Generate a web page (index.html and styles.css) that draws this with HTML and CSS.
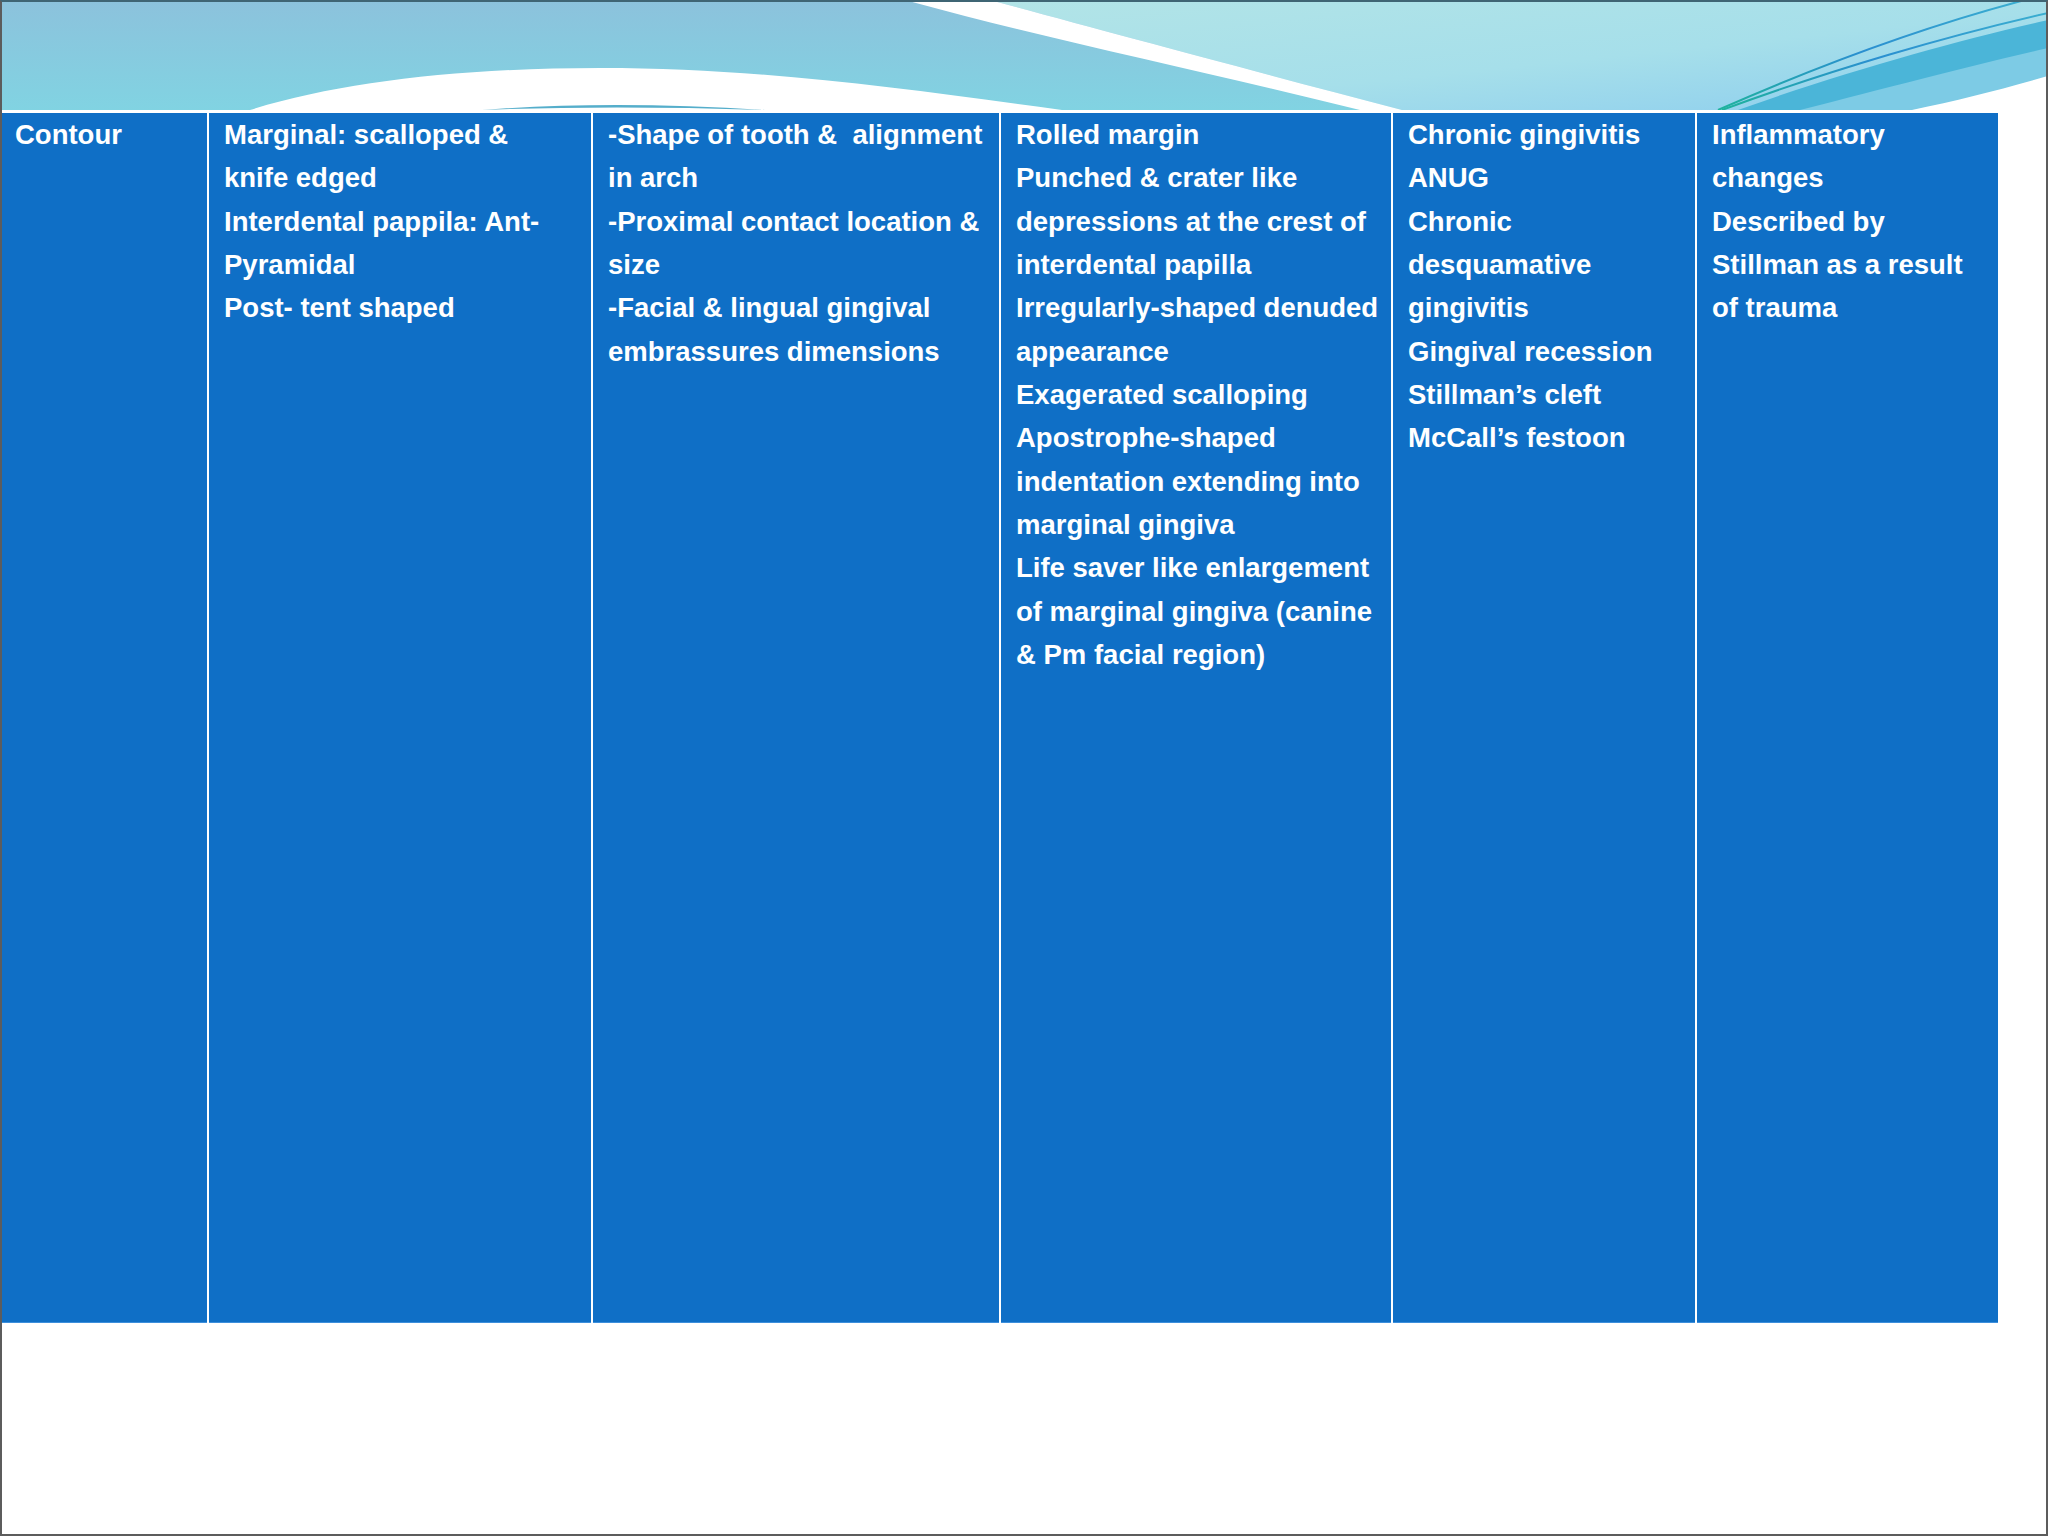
FILE: index.html
```html
<!DOCTYPE html>
<html lang="en">
<head>
<meta charset="utf-8">
<title>Contour</title>
<link rel="stylesheet" href="styles.css">
</head>
<body>
<div class="slide">
  <svg class="banner" width="2044" height="108" viewBox="2 2 2044 108" preserveAspectRatio="none" aria-hidden="true">
    <defs>
      <linearGradient id="gL" x1="0" y1="0" x2="0" y2="1">
        <stop offset="0" stop-color="#8cc2dc"/>
        <stop offset="1" stop-color="#81d3e2"/>
      </linearGradient>
      <linearGradient id="gR" x1="0" y1="0" x2="1" y2="1">
        <stop offset="0" stop-color="#b2e4e7"/>
        <stop offset="0.55" stop-color="#a6dfea"/>
        <stop offset="1" stop-color="#8ccdee"/>
      </linearGradient>
      <linearGradient id="gLine" x1="0" y1="1" x2="1" y2="0">
        <stop offset="0" stop-color="#1fb39c"/>
        <stop offset="0.5" stop-color="#2a8fd0"/>
        <stop offset="1" stop-color="#3aaed0"/>
      </linearGradient>
    </defs>
    <rect x="0" y="0" width="2048" height="110" fill="url(#gL)"/>
    <path d="M990,0 L2048,0 L2048,110 L1402,110 C1250,70 1100,30 990,0 Z" fill="url(#gR)"/>
    <path d="M905,0 L990,0 C1100,30 1250,70 1402,110 L1360,110 C1200,70 1050,40 905,0 Z" fill="#ffffff"/>
    <path d="M250,110 C340,82 460,68 600,68 C760,68 900,88 1062,110 Z" fill="#ffffff"/>
    <path d="M482,110 Q610,100 765,110 Q610,105 482,110 Z" fill="#55aecb"/>
    <path d="M1790,110 C1880,85 1970,60 2048,40 L2048,78 C1990,95 1940,105 1912,110 Z" fill="#7dcbe5"/>
    <path d="M1738,110 C1850,70 1960,40 2048,20 L2048,48 C1960,68 1860,95 1800,110 Z" fill="#4bb5d8"/>
    <path d="M1912,110 C1960,100 2000,90 2048,76 L2048,110 Z" fill="#ffffff"/>
    <path d="M1718,110 C1820,65 1930,25 2025,0" fill="none" stroke="url(#gLine)" stroke-width="2"/>
    <path d="M1722,110 C1830,70 1950,35 2048,13" fill="none" stroke="url(#gLine)" stroke-width="2"/>
  </svg>

  <div class="grid">
    <div class="cell">
      <span class="line">Contour</span>
    </div>
    <div class="cell">
      <span class="line">Marginal: scalloped &amp;</span>
      <span class="line">knife edged</span>
      <span class="line">Interdental pappila: Ant-</span>
      <span class="line">Pyramidal</span>
      <span class="line">Post- tent shaped</span>
    </div>
    <div class="cell">
      <span class="line">-Shape of tooth &amp;&nbsp; alignment</span>
      <span class="line">in arch</span>
      <span class="line">-Proximal contact location &amp;</span>
      <span class="line">size</span>
      <span class="line">-Facial &amp; lingual gingival</span>
      <span class="line">embrassures dimensions</span>
    </div>
    <div class="cell">
      <span class="line">Rolled margin</span>
      <span class="line">Punched &amp; crater like</span>
      <span class="line">depressions at the crest of</span>
      <span class="line">interdental papilla</span>
      <span class="line">Irregularly-shaped denuded</span>
      <span class="line">appearance</span>
      <span class="line">Exagerated scalloping</span>
      <span class="line">Apostrophe-shaped</span>
      <span class="line">indentation extending into</span>
      <span class="line">marginal gingiva</span>
      <span class="line">Life saver like enlargement</span>
      <span class="line">of marginal gingiva (canine</span>
      <span class="line">&amp; Pm facial region)</span>
    </div>
    <div class="cell">
      <span class="line">Chronic gingivitis</span>
      <span class="line">ANUG</span>
      <span class="line">Chronic</span>
      <span class="line">desquamative</span>
      <span class="line">gingivitis</span>
      <span class="line">Gingival recession</span>
      <span class="line">Stillman’s cleft</span>
      <span class="line">McCall’s festoon</span>
    </div>
    <div class="cell">
      <span class="line">Inflammatory</span>
      <span class="line">changes</span>
      <span class="line">Described by</span>
      <span class="line">Stillman as a result</span>
      <span class="line">of trauma</span>
    </div>
  </div>
</div>
</body>
</html>
```

FILE: styles.css
```css
html, body {
  margin: 0;
  padding: 0;
  background: #ffffff;
}

.slide {
  width: 2048px;
  height: 1536px;
  box-sizing: border-box;
  border: 2px solid #5c5c5c;
  border-top-color: #3f6574;
  background: #ffffff;
  overflow: hidden;
}

.banner {
  display: block;
}

.grid {
  display: grid;
  grid-template-columns: 207px 382px 406px 390px 302px 301px;
  column-gap: 2px;
  margin: 3px 0 0 -2px;
  height: 1210px;
}

.cell {
  background: #0f6fc6;
  border-bottom: 1px solid #3d8fdc;
  padding: 0 15px;
  color: #ffffff;
  font-family: "Liberation Sans", Arial, sans-serif;
  font-weight: 700;
  font-size: 27.5px;
  line-height: 43.33px;
  white-space: nowrap;
  overflow: hidden;
}

.line {
  display: block;
}
```
